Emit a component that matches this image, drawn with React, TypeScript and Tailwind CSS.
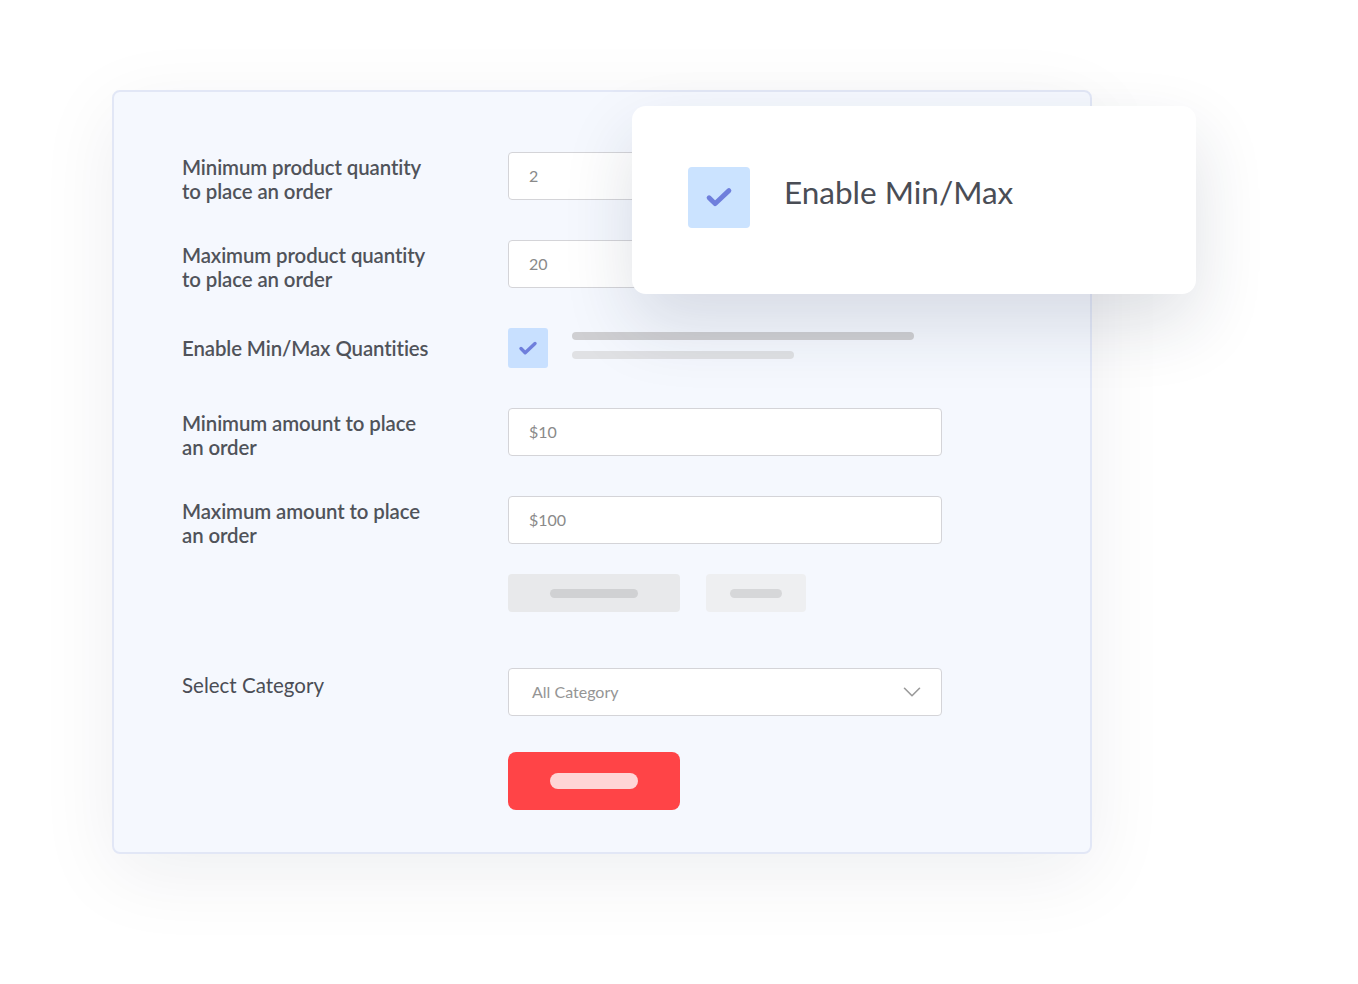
import { ChevronDown } from "lucide-react";

const Check = ({ className }: { className?: string }) => (
  <svg viewBox="0 0 24 24" fill="none" className={className}>
    <path
      d="M5 12.5l4.2 4.2L19 7.5"
      stroke="#6f7fdc"
      strokeWidth="3.4"
      strokeLinecap="round"
      strokeLinejoin="round"
    />
  </svg>
);

const Label = ({ children }: { children: React.ReactNode }) => (
  <div className="w-[326px] shrink-0 text-[20.4px] leading-[24px] font-semibold text-[#50535a] tracking-[-0.1px]">
    {children}
  </div>
);

const TextField = ({ value }: { value: string }) => (
  <div className="w-[434px] h-[48px] flex items-center px-5 bg-white border border-[#d4d4d8] rounded-[4px] text-[16px] text-[#8a8a8a]">
    {value}
  </div>
);

export default function App() {
  return (
    <div
      className="min-h-[984px] w-full bg-white pt-[90px] pl-[112px]"
      style={{ fontFamily: "Lato, 'Open Sans', sans-serif" }}
    >
      <div className="relative w-[980px] h-[764px]">
        {/* main settings card */}
        <div className="w-full h-full rounded-[8px] bg-[#f5f8fe] border-2 border-[#e2e7f6] shadow-[0_20px_80px_rgba(20,30,60,0.07)] pl-[68px] pt-[60px] flex flex-col">
          {/* min qty */}
          <div className="flex items-center h-[48px]">
            <Label>
              <div className="pt-[6px]">Minimum product quantity</div>
              <div>to place an order</div>
            </Label>
            <TextField value="2" />
          </div>

          {/* max qty */}
          <div className="flex items-center h-[48px] mt-[40px]">
            <Label>
              <div className="pt-[6px]">Maximum product quantity</div>
              <div>to place an order</div>
            </Label>
            <TextField value="20" />
          </div>

          {/* enable checkbox */}
          <div className="flex items-center h-[40px] mt-[40px]">
            <Label>Enable Min/Max Quantities</Label>
            <div className="w-[40px] h-[40px] rounded-[3px] bg-[#c8e0ff] flex items-center justify-center">
              <Check className="w-[24px] h-[24px]" />
            </div>
            <div className="ml-[24px] flex flex-col gap-[11px] -mt-[6px]">
              <div className="w-[342px] h-[8px] rounded-full bg-[#cfcfd2]" />
              <div className="w-[222px] h-[8px] rounded-full bg-[#e0e1e4]" />
            </div>
          </div>

          {/* min amount */}
          <div className="flex items-center h-[48px] mt-[40px]">
            <Label>
              <div className="pt-[6px]">Minimum amount to place</div>
              <div>an order</div>
            </Label>
            <TextField value="$10" />
          </div>

          {/* max amount */}
          <div className="flex items-center h-[48px] mt-[40px]">
            <Label>
              <div className="pt-[6px]">Maximum amount to place</div>
              <div>an order</div>
            </Label>
            <TextField value="$100" />
          </div>

          {/* placeholder buttons */}
          <div className="flex mt-[30px] pl-[326px] gap-[26px]">
            <div className="w-[172px] h-[38px] rounded-[4px] bg-[#e8e9eb] flex items-center justify-center">
              <div className="w-[88px] h-[9px] rounded-full bg-[#d0d1d3]" />
            </div>
            <div className="w-[100px] h-[38px] rounded-[4px] bg-[#eeeff1] flex items-center justify-center">
              <div className="w-[52px] h-[9px] rounded-full bg-[#d6d7d9]" />
            </div>
          </div>

          {/* category */}
          <div className="flex items-start h-[48px] mt-[56px]">
            <div className="w-[326px] shrink-0 text-[20.5px] leading-[34px] text-[#4a4d55]">
              Select Category
            </div>
            <div className="w-[434px] h-[48px] flex items-center justify-between pl-[23px] pr-[14px] bg-white border border-[#d4d4d8] rounded-[4px] text-[16px] text-[#959595]">
              <span>All Category</span>
              <ChevronDown className="w-[30px] h-[30px] text-[#9a9a9a]" strokeWidth={1.3} />
            </div>
          </div>

          {/* submit */}
          <div className="mt-[36px] pl-[326px]">
            <div className="w-[172px] h-[58px] rounded-[8px] bg-[#ff4447] flex items-center justify-center">
              <div className="w-[88px] h-[16px] rounded-full bg-[#ffd5d6]" />
            </div>
          </div>
        </div>

        {/* floating popup */}
        <div className="absolute left-[520px] top-[16px] w-[564px] h-[188px] rounded-[14px] bg-white shadow-[0_30px_70px_rgba(30,40,70,0.14)] flex items-center pl-[56px] pb-[2px]">
          <div className="w-[62px] h-[61px] rounded-[4px] bg-[#cbe3ff] flex items-center justify-center -mt-[4px]">
            <Check className="w-[34px] h-[34px]" />
          </div>
          <div className="ml-[34px] -mt-[12px] text-[31.5px] leading-none text-[#4a4d55]">
            Enable Min/Max
          </div>
        </div>
      </div>
    </div>
  );
}
